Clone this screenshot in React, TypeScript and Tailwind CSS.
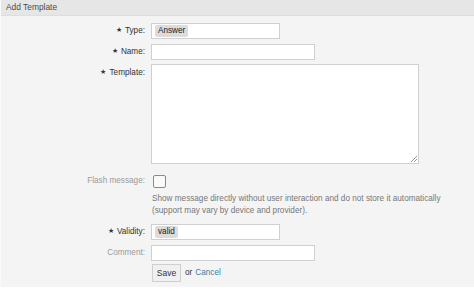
import React from 'react';

const font = { fontFamily: '"Liberation Sans", Arial, sans-serif' };

function Label({ text, required }: { text: string; required?: boolean }) {
    return (
        <div className={`w-[145px] shrink-0 text-right pr-[1px] ${required ? 'text-[#333]' : 'text-[#9a9a9a]'}`}>
            {required && <span className="text-[6.5px] mr-[3px] align-[1px]">★</span>}
            {text}:
        </div>
    );
}

function Chip({ text }: { text: string }) {
    return (
        <span className="inline-block bg-[#dcdcdc] text-[#222] rounded-[2px] px-[3px] leading-[12px] ml-[3px] mt-[1px]">
            {text}
        </span>
    );
}

export default function App() {
    return (
        <div className="w-[474px] h-[290px] bg-white text-[8.2px]" style={font}>
            <div className="h-[287px] bg-[#f4f4f4] border-l border-[#fafafa]">
                <div className="h-[16px] bg-[#e6e6e6] border-b border-[#dedede] pl-[5px] leading-[15px] text-[8.4px] text-[#4a4a4a]">
                    Add Template
                </div>

                <div className="flex flex-col pt-[7px]">
                    <div className="flex items-center h-[16px]">
                        <Label text="Type" required />
                        <div className="ml-[5px] w-[129px] h-[16px] bg-white border border-[#d0d0d0]">
                            <Chip text="Answer" />
                        </div>
                    </div>

                    <div className="flex items-center h-[16px] mt-[5px]">
                        <Label text="Name" required />
                        <div className="ml-[5px] w-[164px] h-[16px] bg-white border border-[#d0d0d0]" />
                    </div>

                    <div className="flex items-start mt-[4px]">
                        <div className="pt-[3px]">
                            <Label text="Template" required />
                        </div>
                        <div className="relative ml-[5px] w-[268px] h-[100px] bg-white border border-[#d0d0d0]">
                            <svg className="absolute right-[1px] bottom-[1px]" width="6" height="6" viewBox="0 0 6 6">
                                <path d="M6 0 L0 6 M6 3 L3 6" stroke="#999" strokeWidth="1" />
                            </svg>
                        </div>
                    </div>

                    <div className="flex items-center h-[13px] mt-[11px]">
                        <Label text="Flash message" />
                        <div className="ml-[7px] w-[13px] h-[13px] bg-[#fafafa] border border-[#8a8a8a] rounded-[2px]" />
                    </div>

                    <div className="ml-[151px] mt-[5px] leading-[12px] text-[#777]">
                        Show message directly without user interaction and do not store it automatically
                        <br />
                        (support may vary by device and provider).
                    </div>

                    <div className="flex items-center h-[16px] mt-[7px]">
                        <Label text="Validity" required />
                        <div className="ml-[5px] w-[129px] h-[16px] bg-white border border-[#d0d0d0]">
                            <Chip text="valid" />
                        </div>
                    </div>

                    <div className="flex items-center h-[16px] mt-[5px]">
                        <Label text="Comment" />
                        <div className="ml-[5px] w-[164px] h-[16px] bg-white border border-[#d0d0d0]" />
                    </div>

                    <div className="flex items-center mt-[3px] ml-[151px]">
                        <button className="w-[29px] h-[18px] bg-[#f0f0f0] border border-[#cfcfcf] text-[#333] text-[8.5px] font-medium">
                            Save
                        </button>
                        <span className="ml-[4px] text-[#333]">or</span>
                        <span className="ml-[3px] text-[#3b7ea3]">Cancel</span>
                    </div>
                </div>
            </div>
        </div>
    );
}
